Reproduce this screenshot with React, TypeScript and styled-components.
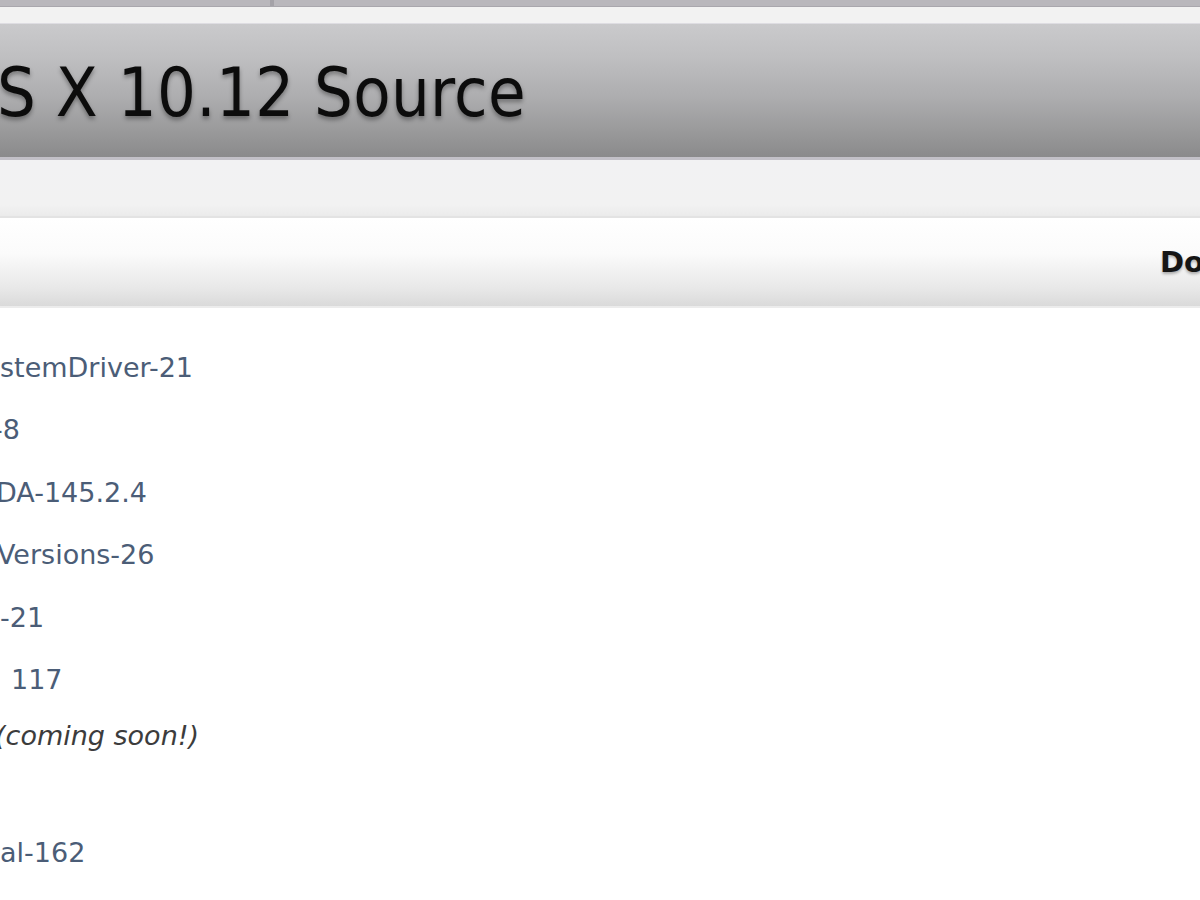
import React from 'react';
import styled, { createGlobalStyle } from 'styled-components';

const GlobalStyle = createGlobalStyle`
  html, body {
    margin: 0;
    padding: 0;
    background: #ffffff;
    overflow: hidden;
  }
  body {
    font-family: "DejaVu Sans", Verdana, sans-serif;
  }
`;

const Page = styled.div`
  width: 1200px;
  height: 900px;
  overflow: hidden;
  display: flex;
  flex-direction: column;
  background: #ffffff;
`;

const TabStrip = styled.div`
  height: 6px;
  display: flex;
  background: #b9b7bc;
  border-bottom: 1px solid #a9a7ad;

  .tab {
    width: 270px;
    border-right: 4px solid #a4a2a8;
  }
`;

const Spacer = styled.div`
  height: 16px;
  background: #f2f2f2;
  border-bottom: 1px solid #dedde2;
`;

const TitleBar = styled.div`
  height: 133px;
  display: flex;
  align-items: center;
  background: linear-gradient(
    to bottom,
    #cacacc 0%,
    #bfbfc1 25%,
    #adadaf 55%,
    #9a9a9b 80%,
    #8a8a8b 100%
  );
  border-bottom: 3px solid #c2c0c7;

  h1 {
    margin: 4px 0 0 -3px;
    font-family: "DejaVu Sans Condensed", "DejaVu Sans", sans-serif;
    font-weight: normal;
    font-size: 68px;
    letter-spacing: 0.3px;
    color: #0c0c0c;
    text-shadow: 0 3px 4px rgba(0, 0, 0, 0.35);
    white-space: nowrap;
  }
`;

const SubBar = styled.div`
  height: 56px;
  background: linear-gradient(to bottom, #f2f2f3 0%, #f2f2f2 80%, #ebebeb 100%);
  border-bottom: 2px solid #e3e3e3;
`;

const TableHead = styled.div`
  height: 88px;
  display: flex;
  align-items: center;
  justify-content: flex-end;
  background: linear-gradient(to bottom, #ffffff 0%, #fbfbfb 40%, #e8e8e8 80%, #dadada 100%);
  border-bottom: 2px solid #ececec;

  span {
    width: 40px;
    overflow: hidden;
    white-space: nowrap;
    font-size: 29px;
    font-weight: 600;
    color: #151515;
    text-shadow: 0 2px 3px rgba(0, 0, 0, 0.3);
  }
`;

const List = styled.ul`
  list-style: none;
  margin: 0;
  padding: 28px 0 0 0;
`;

const Row = styled.li<{ $shift?: number; $height?: number; $top?: number }>`
  height: ${p => p.$height ?? 62.5}px;
  margin-top: ${p => p.$top ?? 0}px;
  display: flex;
  align-items: center;
  font-size: 27px;
  white-space: nowrap;

  a {
    margin-left: ${p => p.$shift ?? 0}px;
    color: #4b5d77;
    text-decoration: none;
  }

  em {
    margin-left: ${p => p.$shift ?? 0}px;
    color: #3c3c3c;
    font-size: 27px;
  }
`;

const rows = [
  { text: 'stemDriver-21', shift: 0 },
  { text: '-8', shift: -7 },
  { text: 'DA-145.2.4', shift: -4 },
  { text: 'Versions-26', shift: -3 },
  { text: '-21', shift: 0 },
  { text: '117', shift: 11 },
];

export default function App() {
  return (
    <Page>
      <GlobalStyle />
      <TabStrip>
        <div className="tab" />
      </TabStrip>
      <Spacer />
      <TitleBar>
        <h1>S X 10.12 Source</h1>
      </TitleBar>
      <SubBar />
      <TableHead>
        <span>Download</span>
      </TableHead>
      <List>
        {rows.map(r => (
          <Row key={r.text} $shift={r.shift}>
            <a href="#">{r.text}</a>
          </Row>
        ))}
        <Row $shift={-5} $height={48}>
          <em>(coming soon!)</em>
        </Row>
        <Row $top={62}>
          <a href="#">al-162</a>
        </Row>
      </List>
    </Page>
  );
}
